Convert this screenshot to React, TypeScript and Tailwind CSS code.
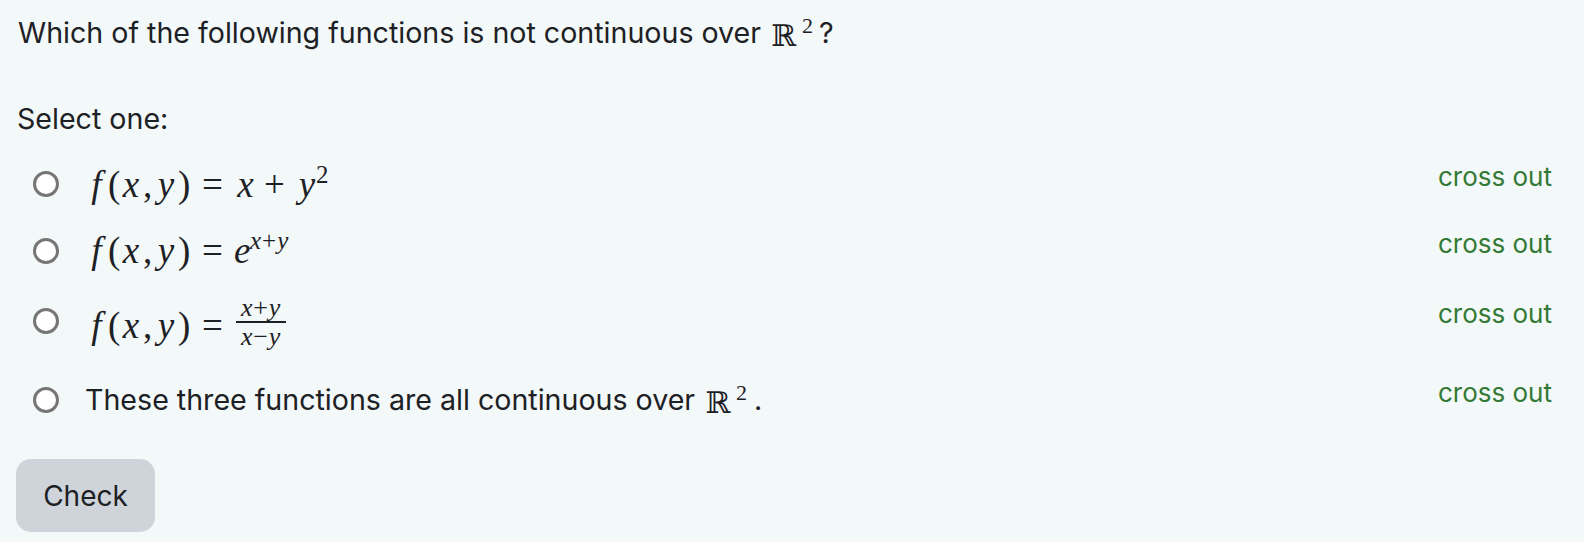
import React from "react";

const sans = "font-['Inter','Liberation_Sans',sans-serif]";
const serif = "font-['Liberation_Serif','DejaVu_Serif',serif]";

// double-struck R with a raised 2, as in the quiz text
function Reals() {
  return (
    <span className="inline-flex items-start ml-[10px]">
      <span className="font-['DejaVu_Serif',serif] text-[30px] leading-none translate-y-[3px]">ℝ</span>
      <span className={`${serif} text-[22px] leading-none ml-[6px] -translate-y-[3px]`}>2</span>
    </span>
  );
}

// f(x,y) =  laid out on fixed glyph boxes so it keeps the math spacing
function Lhs() {
  return (
    <>
      <i className="inline-block w-[23px] text-center">f</i>
      <span className="inline-block w-[11px] text-center">(</span>
      <i className="inline-block w-[24px] text-center">x</i>
      <span className="inline-block w-[11px]">,</span>
      <i className="inline-block w-[24px] text-center">y</i>
      <span className="inline-block w-[9px] text-center">)</span>
      <span className="inline-block w-[21px] ml-[15px] text-center">=</span>
    </>
  );
}

function Radio() {
  return (
    <span className="w-[26px] h-[26px] shrink-0 rounded-full border-[3px] border-[#767676] bg-white" />
  );
}

function Row({ h, children }: { h: string; children: React.ReactNode }) {
  return (
    <div className={`flex items-center pl-[33px] pr-[32px] ${h}`}>
      <Radio />
      <div className="ml-[26px] flex-1 flex items-center">{children}</div>
      <span className="text-[26px] leading-[32px] text-[#337a36] mb-[14px]">cross out</span>
    </div>
  );
}

export default function App() {
  return (
    <div className={`min-h-screen w-full bg-[#f3f8f8] text-[#1d2125] ${sans}`}>
      <div className="pt-[13px] px-[18px] text-[28.6px] leading-[40px] flex items-center">
        <span>Which of the following functions is not continuous over</span>
        <Reals />
        <span className="ml-[6px]">?</span>
      </div>
      <div className="mt-[46px] px-[17px] text-[28.6px] leading-[40px]">Select one:</div>

      <div className="mt-[10px]">
        <Row h="h-[70px]">
          <span className={`${serif} text-[37px] leading-none flex items-baseline`}>
            <Lhs />
            <i className="inline-block w-[23px] ml-[11px] text-center">x</i>
            <span className="inline-block w-[20px] ml-[7px] text-center">+</span>
            <i className="inline-block w-[24px] ml-[11px] text-center">y</i>
            <span className="text-[25px] -translate-y-[14px] -ml-[3px]">2</span>
          </span>
        </Row>
        <Row h="h-[63px]">
          <span className={`${serif} text-[37px] leading-none flex items-baseline`}>
            <Lhs />
            <i className="inline-block w-[15px] ml-[11px] text-center">e</i>
            <span className="text-[25px] -translate-y-[14px] ml-[1px] tracking-[0.04em]">
              <i>x</i>+<i>y</i>
            </span>
          </span>
        </Row>
        <Row h="h-[78px]">
          <span className={`${serif} text-[37px] leading-none flex items-center`}>
            <span className="flex items-baseline translate-y-[4px]">
              <Lhs />
            </span>
            <span className="inline-flex flex-col items-center text-[26px] leading-[25px] ml-[13px] w-[50px] translate-y-[1px]">
              <span className="tracking-[0.03em]">
                <i>x</i>+<i>y</i>
              </span>
              <span className="w-full h-[2.5px] bg-[#1d2125] my-[1px]" />
              <span className="tracking-[0.03em]">
                <i>x</i>−<i>y</i>
              </span>
            </span>
          </span>
        </Row>
        <Row h="h-[80px]">
          <span className="text-[28.6px] leading-[40px] flex items-center">
            <span>These three functions are all continuous over</span>
            <Reals />
            <span className="ml-[7px]">.</span>
          </span>
        </Row>
      </div>

      <div className="mt-[19px] px-[16px]">
        <button className="h-[73px] w-[139px] rounded-[15px] bg-[#ced4da] text-[28px] text-[#1d2125]">
          Check
        </button>
      </div>
    </div>
  );
}
